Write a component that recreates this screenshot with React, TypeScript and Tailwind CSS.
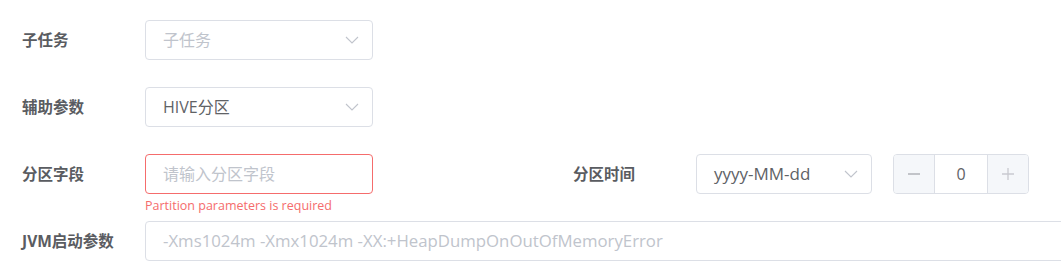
const font = { fontFamily: '"Open Sans", "Noto Sans CJK SC", sans-serif' }

function Chevron() {
  return (
    <svg width="14" height="8" viewBox="0 0 14 8" fill="none" className="shrink-0">
      <polyline points="1,1 7,7 13,1" stroke="#c0c4cc" strokeWidth="1.1" />
    </svg>
  )
}

function Label({ children }: { children: React.ReactNode }) {
  return (
    <div className="w-[123px] shrink-0 text-[15.5px] font-bold text-[#5a5c61] leading-[40px]">
      {children}
    </div>
  )
}

function Select({
  value,
  placeholder,
  width,
  textSize = 'text-[16px]',
}: {
  value?: string
  placeholder?: string
  width: string
  textSize?: string
}) {
  return (
    <div
      className={`${width} h-10 shrink-0 flex items-center justify-between rounded-[4px] border border-[#dcdfe6] bg-white pl-[17px] pr-[13px]`}
    >
      <span className={`${textSize} ${value ? 'text-[#606266]' : 'text-[#c0c4cc]'}`}>{value ?? placeholder}</span>
      <Chevron />
    </div>
  )
}

export default function App() {
  return (
    <div className="w-[1061px] h-[277px] overflow-hidden bg-white pl-[22px] pt-5" style={font}>
      {/* 子任务 */}
      <div className="flex items-center mb-[27px]">
        <Label>子任务</Label>
        <Select placeholder="子任务" width="w-[228px]" />
      </div>

      {/* 辅助参数 */}
      <div className="flex items-center mb-[27px]">
        <Label>辅助参数</Label>
        <Select value="HIVE分区" width="w-[228px]" />
      </div>

      {/* 分区字段 + 分区时间 */}
      <div className="flex items-center mb-[27px]">
        <div className="w-[551px] shrink-0 flex items-center">
          <Label>分区字段</Label>
          <div className="relative">
            <div className="w-[228px] h-10 flex items-center rounded-[4px] border border-[#f56c6c] bg-white pl-[17px]">
              <span className="text-[16px] text-[#c0c4cc]">请输入分区字段</span>
            </div>
            <div className="absolute left-0 top-full pt-[3px] text-[12.5px] leading-[17px] text-[#f56c6c] whitespace-nowrap">
              Partition parameters is required
            </div>
          </div>
        </div>
        <Label>分区时间</Label>
        <Select value="yyyy-MM-dd" width="w-[176px]" textSize="text-[17px]" />
        <div className="ml-[21px] h-10 w-[136px] flex rounded-[4px] border border-[#dcdfe6] overflow-hidden">
          <div className="w-[41px] flex items-center justify-center bg-[#f5f7fa] border-r border-[#dcdfe6]">
            <svg width="14" height="14" viewBox="0 0 14 14">
              <line x1="1" y1="7" x2="13" y2="7" stroke="#b1b3b8" strokeWidth="1.3" />
            </svg>
          </div>
          <div className="flex-1 flex items-center justify-center text-[16px] text-[#606266] bg-white">0</div>
          <div className="w-[41px] flex items-center justify-center bg-[#f5f7fa] border-l border-[#dcdfe6]">
            <svg width="14" height="14" viewBox="0 0 14 14">
              <line x1="1" y1="7" x2="13" y2="7" stroke="#c8cad0" strokeWidth="1.3" />
              <line x1="7" y1="1" x2="7" y2="13" stroke="#c8cad0" strokeWidth="1.3" />
            </svg>
          </div>
        </div>
      </div>

      {/* JVM启动参数 */}
      <div className="flex items-center">
        <Label>JVM启动参数</Label>
        <div className="w-[960px] h-10 shrink-0 flex items-center rounded-[4px] border border-[#dcdfe6] bg-white pl-[17px]">
          <span className="text-[16.8px] text-[#c0c4cc] whitespace-nowrap">
            -Xms1024m -Xmx1024m -XX:+HeapDumpOnOutOfMemoryError
          </span>
        </div>
      </div>
    </div>
  )
}
